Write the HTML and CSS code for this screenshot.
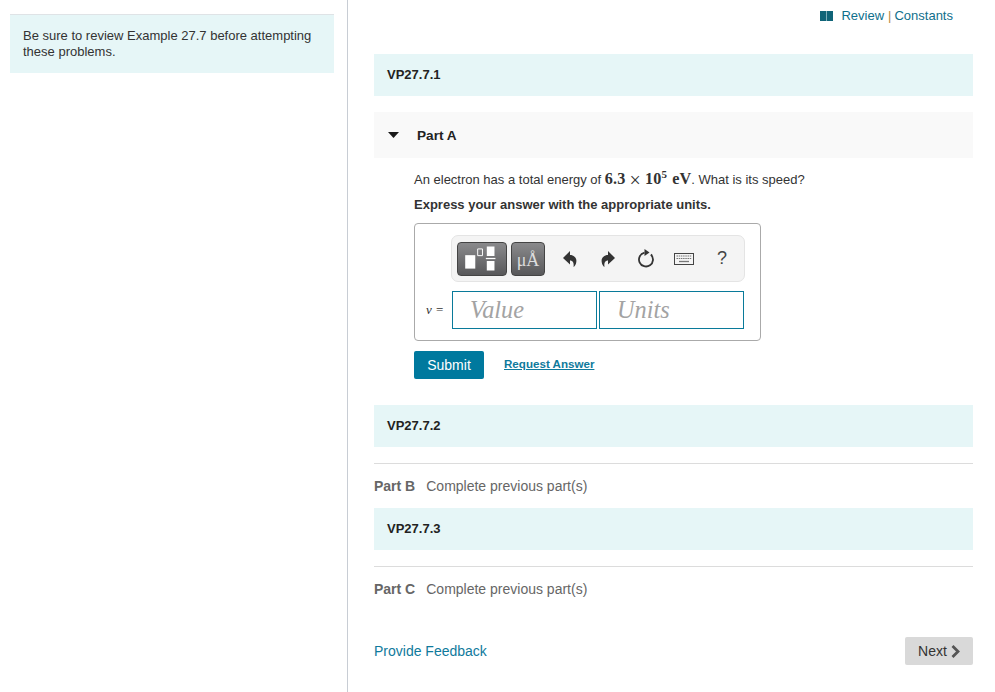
FILE: index.html
```html
<!DOCTYPE html>
<html lang="en">
<head>
<meta charset="utf-8">
<title>VP27.7.1</title>
<link rel="stylesheet" href="styles.css">
</head>
<body>
<div class="page">
  <aside class="side">
    <div class="note">Be sure to review Example 27.7 before attempting these problems.</div>
  </aside>
  <main class="content">
    <div class="toplinks">
      <svg class="book" width="13" height="10" viewBox="0 0 13 10"><path d="M0 0h6v10H0zM7 0h6v10H7z" fill="#0f6478"/><path d="M6 0h1v10H6z" fill="#7fb0bc"/></svg>
      <a>Review</a><span class="sep">|</span><a>Constants</a>
    </div>
    <div class="band first">VP27.7.1</div>
    <div class="parthead">
      <svg class="caret" width="11" height="6" viewBox="0 0 11 6"><path d="M0 0h11L5.500 6z" fill="#1a1a1a"/></svg>
      <span>Part A</span>
    </div>
    <div class="partbody">
      <p class="q">An electron has a total energy of <span class="math">6.3 <span class="times">×</span> 10<sup>5</sup> eV</span>. What is its speed?</p>
      <p class="inst">Express your answer with the appropriate units.</p>
      <div class="answer">
        <div class="toolwrap">
          <div class="toolbar">
            <div class="tbtn tpl">
              <svg width="50" height="34" viewBox="0 0 50 34"><path d="M7.500 13h10.500v14H7.500z" fill="#fff"/><path d="M20.500 6.500h5v7h-5z" fill="none" stroke="#fff"/><path d="M30 4h8v10h-8zM30 19h8v10h-8z" fill="#fff"/><path d="M29 16.500h10" stroke="#fff" stroke-width="1.300"/></svg>
            </div>
            <div class="tbtn unit">μÅ</div>
            <div class="ticon"><svg width="14" height="16" viewBox="0 0 14 16"><path d="M0 7 7 0v4c4 0 7 3 6.300 7-.3 2.500-1.300 4-2.800 5 .5-3 0-6.500-3.500-6.500v4z" fill="#333"/></svg></div>
            <div class="ticon"><svg width="14" height="16" viewBox="0 0 14 16"><path d="M14 7 7 0v4c-4 0-7 3-6.300 7 .3 2.500 1.300 4 2.800 5-.5-3 0-6.500 3.500-6.500v4z" fill="#333"/></svg></div>
            <div class="ticon"><svg width="18" height="19" viewBox="0 0 18 19"><path d="M7.500 3.660A7 7 0 1 0 13.900 5.500" fill="none" stroke="#333" stroke-width="1.800"/><path d="M7.500 0l5 3.500-5 3.500z" fill="#333"/></svg></div>
            <div class="ticon"><svg width="20" height="12" viewBox="0 0 20 12"><rect x=".5" y=".5" width="19" height="11" fill="#f4f4f4" stroke="#444"/><path d="M2.500 3h15M2.500 5.500h15" stroke="#777" stroke-width="1.200" stroke-dasharray="1.500 .7"/><path d="M5 8.500h10" stroke="#777" stroke-width="1.300"/></svg></div>
            <div class="ticon help">?</div>
          </div>
        </div>
        <div class="inputrow">
          <label class="varlabel"><i>v</i> =</label>
          <div class="field">Value</div>
          <div class="field">Units</div>
        </div>
      </div>
      <div class="actions">
        <button class="submit" type="button">Submit</button>
        <a class="request">Request Answer</a>
      </div>
    </div>
    <div class="band second">VP27.7.2</div>
    <div class="locked"><b>Part B</b><span>Complete previous part(s)</span></div>
    <div class="band">VP27.7.3</div>
    <div class="locked"><b>Part C</b><span>Complete previous part(s)</span></div>
    <div class="footer">
      <a class="feedback">Provide Feedback</a>
      <button class="next" type="button">Next<svg width="9" height="13" viewBox="0 0 9 13"><path d="M1.500 1 7 6.500 1.500 12" fill="none" stroke="#555" stroke-width="2.800"/></svg></button>
    </div>
  </main>
</div>
</body>
</html>
```
FILE: styles.css
```css
* { box-sizing: border-box; }
html, body { margin: 0; height: 100%; }
body { font-family: "Liberation Sans", Arial, sans-serif; font-size: 14px; color: #333; background: #fff; overflow: hidden; }
.page { display: grid; grid-template-columns: 348px 1fr; height: 692px; }
.side { border-right: 1px solid #c8cdd4; padding: 14px 13px 0 10px; }
.note { background: #e6f6f7; border-top: 1px solid #dfe3e6; height: 59px; padding: 13px 13px 0; line-height: 16px; font-size: 13px; }
.content { padding: 0 22px 0 26px; }
.toplinks { height: 54px; padding: 8px 20px 0 0; display: flex; justify-content: flex-end; align-items: flex-start; line-height: 16px; font-size: 13px; color: #0f6f8c; }
.book { margin: 3px 8px 0 0; }
.sep { margin: 0 3px 0 4px; color: #b98a3f; }
.band { background: #e6f6f7; height: 42px; padding: 0 0 2px 13px; display: flex; align-items: center; font-size: 13px; font-weight: 700; color: #222; }
.parthead { background: #f9f9f9; height: 46px; margin-top: 16px; display: flex; align-items: center; padding-left: 14px; font-size: 13.6px; font-weight: 700; color: #222; }
.caret { margin-right: 18px; margin-top: -1px; }
.partbody { padding-left: 40px; }
.q { margin: 10px 0 0; height: 22px; line-height: 22px; font-size: 13px; }
.math { font-family: "Liberation Serif", serif; font-weight: 700; font-size: 16.2px; letter-spacing: .1px; }
.times { font-weight: 400; font-size: 20px; line-height: 0; vertical-align: -3px; }
.math sup { font-size: 11px; line-height: 0; vertical-align: 6px; margin-right: 1px; }
.inst { margin: 7px 0 0; line-height: 16px; font-size: 13px; font-weight: 700; }
.answer { width: 347px; height: 118px; margin-top: 10px; border: 1px solid #aaa; border-radius: 4px; padding: 11px 0 0 11px; }
.toolwrap { padding-left: 25px; }
.toolbar { width: 294px; height: 47px; background: #f4f4f4; border: 1px solid #e4e4e4; border-radius: 7px; padding: 5px; display: flex; align-items: center; }
.tbtn { height: 34px; border-radius: 4px; border: 1px solid #444; background: linear-gradient(#8a8a8c, #58585a); color: #fff; display: flex; align-items: center; justify-content: center; flex: none; }
.tpl { width: 50px; }
.unit { width: 34px; margin-left: 4px; padding-top: 3px; font-family: "Liberation Serif", serif; font-size: 18px; color: #ddd; }
.ticon { width: 38px; height: 34px; display: flex; align-items: center; justify-content: center; flex: none; }
.tbtn.unit + .ticon { margin-left: 6px; }
.help { font-size: 18px; color: #444; }
.inputrow { display: flex; align-items: center; margin-top: 9px; }
.varlabel { width: 26px; flex: none; font-family: "Liberation Serif", serif; font-size: 13px; word-spacing: 1px; white-space: nowrap; }
.field { width: 145px; height: 38px; flex: none; border: 1px solid #097a9a; margin-right: 2px; padding-left: 17px; font-family: "Liberation Serif", serif; font-style: italic; font-size: 24.3px; line-height: 36px; color: #a3a3a3; }
.actions { display: flex; align-items: center; margin-top: 10px; }
.submit { width: 70px; height: 28px; background: #00799e; color: #fff; border: 0; border-radius: 2px; font: 14px "Liberation Sans", Arial, sans-serif; padding: 0; }
.request { margin-left: 20px; font-size: 11.6px; font-weight: 700; color: #0f7a9c; text-decoration: underline; position: relative; top: -2px; }
.second { margin-top: 26px; }
.locked { height: 45px; margin-top: 16px; border-top: 1px solid #dcdcdc; display: flex; align-items: center; color: #666; }
.locked b { margin-right: 11px; }
.footer { display: flex; justify-content: space-between; align-items: center; margin-top: 26px; }
.feedback { color: #0f7a9c; }
.next { width: 68px; height: 28px; background: #d9d9d9; border: 0; border-radius: 2px; color: #333; font: 14px "Liberation Sans", Arial, sans-serif; padding: 0; display: flex; align-items: center; justify-content: center; gap: 4px; }
```
